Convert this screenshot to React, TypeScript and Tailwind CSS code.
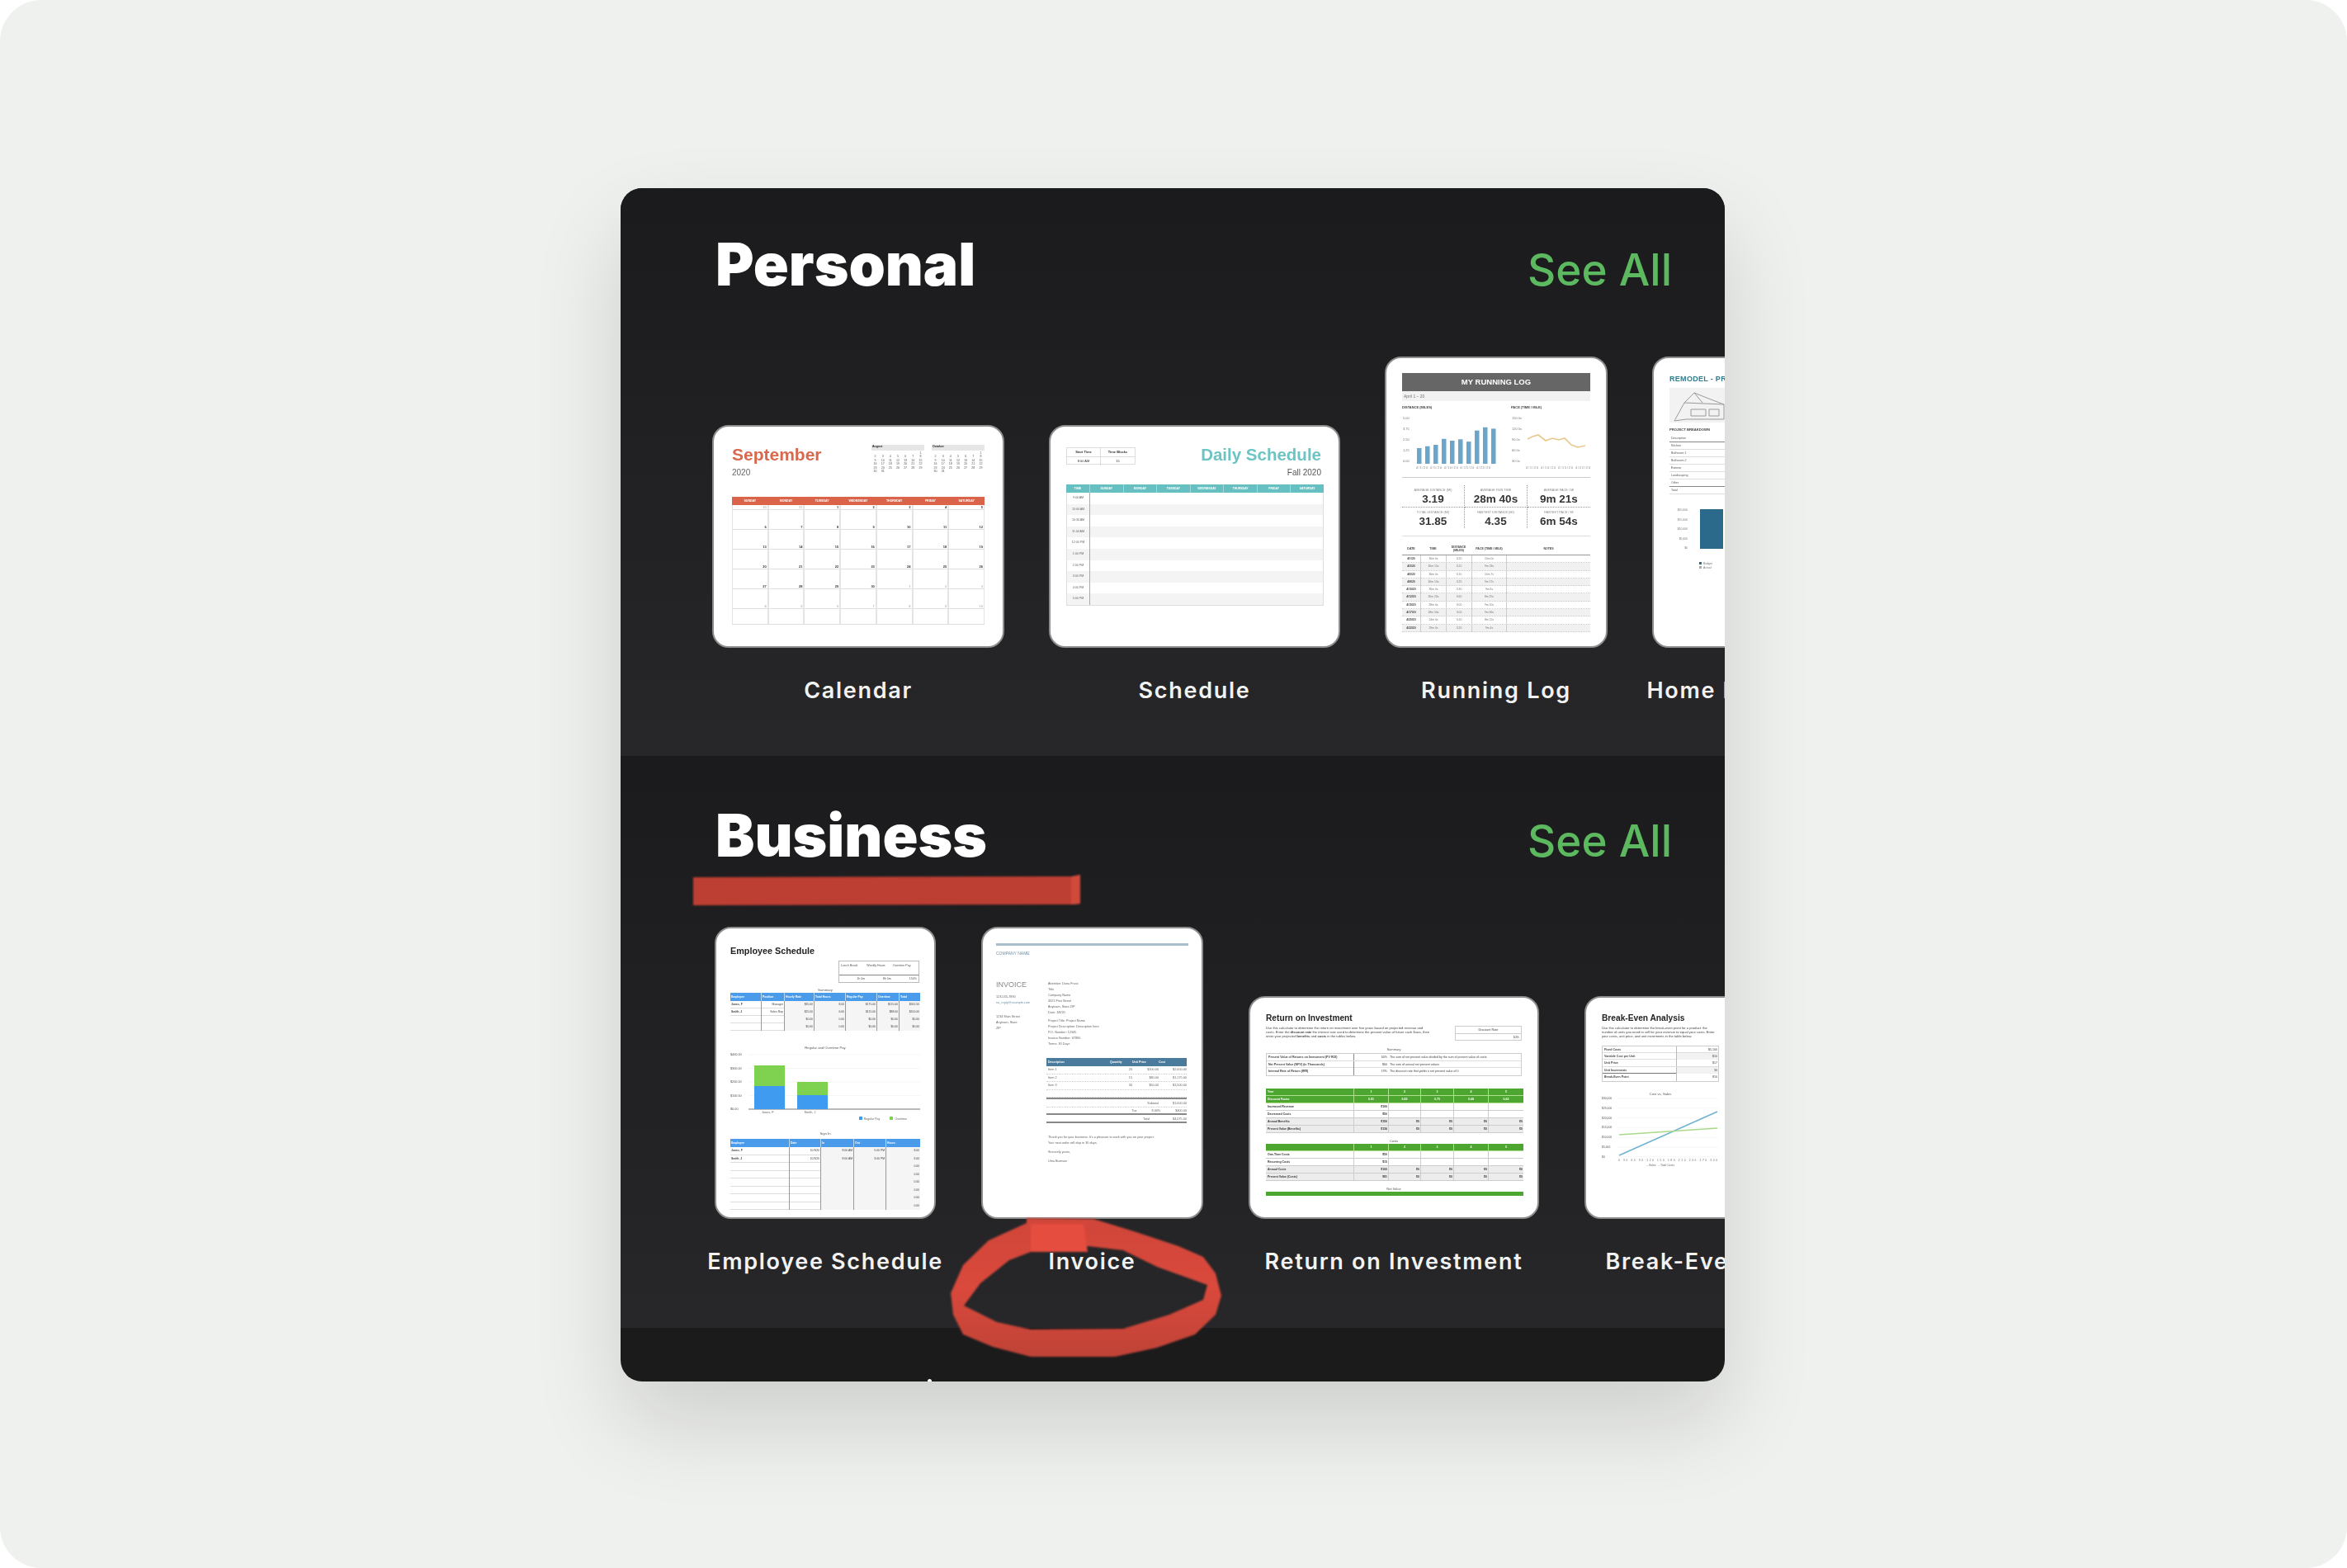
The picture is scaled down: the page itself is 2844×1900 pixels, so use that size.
import type { ReactNode } from 'react'

const weekdays = ['SUNDAY', 'MONDAY', 'TUESDAY', 'WEDNESDAY', 'THURSDAY', 'FRIDAY', 'SATURDAY']
const calendarDays = [
  ['30', '31', '1', '2', '3', '4', '5'],
  ['6', '7', '8', '9', '10', '11', '12'],
  ['13', '14', '15', '16', '17', '18', '19'],
  ['20', '21', '22', '23', '24', '25', '26'],
  ['27', '28', '29', '30', '1', '2', '3'],
  ['4', '5', '6', '7', '8', '9', '10'],
]
const scheduleTimes = ['9:00 AM', '10:00 AM', '10:30 AM', '11:00 AM', '12:00 PM', '1:00 PM', '2:00 PM', '3:00 PM', '4:00 PM', '5:00 PM']
const runRows = [
  ['4/1/20', '30m 0s', '3.20', '10m 0s'],
  ['4/3/20', '30m 15s', '3.25', '9m 18s'],
  ['4/5/20', '30m 0s', '3.15', '10m 7s'],
  ['4/8/20', '30m 10s', '3.25', '9m 17s'],
  ['4/10/20', '30m 0s', '3.30', '9m 6s'],
  ['4/12/20', '30m 20s', '3.60', '8m 25s'],
  ['4/15/20', '28m 0s', '3.00', '9m 20s'],
  ['4/17/20', '28m 50s', '3.00', '9m 36s'],
  ['4/20/20', '24m 0s', '3.20', '8m 12s'],
  ['4/22/20', '29m 0s', '3.20', '9m 4s'],
]
const invoiceLines = ['Attention: Dana Fruss', 'Title', 'Company Name', '4321 First Street', 'Anytown, State ZIP', 'Date: 1/8/20']
const projectLines = ['Project Title: Project Name', 'Project Description: Description here', 'P.O. Number: 12345', 'Invoice Number: 67890', 'Terms: 30 Days']

function Card({ className, children }: { className: string; children: ReactNode }) {
  return (
    <div className={`shrink-0 overflow-hidden rounded-[20px] border-[2px] border-[#8e8e8e] bg-white font-['Liberation_Sans',sans-serif] text-[#333] ${className}`}>
      <div className="h-full blur-[0.7px]">{children}</div>
    </div>
  )
}

function Tile({ className, label, card, children }: { className: string; label: string; card: string; children: ReactNode }) {
  return (
    <div className={`flex shrink-0 flex-col items-center ${className}`}>
      <Card className={card}>{children}</Card>
      <p className="mt-[32px] w-max text-[27px] leading-[40px] font-semibold tracking-[1.7px] whitespace-nowrap text-[#f2f2f2]">
        {label}
      </p>
    </div>
  )
}

function SectionHeader({ title }: { title: string }) {
  return (
    <div className="flex h-[80px] items-center justify-between pr-[64px] pl-[115px]">
      <h2 className="text-[71px] leading-[80px] font-black text-white">{title}</h2>
      <span className="pt-[14px] text-[53px] leading-[80px] font-medium text-[#5cb95f]">See All</span>
    </div>
  )
}

function MiniMonth({ name }: { name: string }) {
  return (
    <div className="w-[64px] text-[3.6px] leading-[4.4px] text-[#555]">
      <div className="h-[7px] bg-[#e6e6e6] px-[1px] font-bold text-[#222]">{name}</div>
      <div className="mt-[1px] grid grid-cols-7 text-center">
        {Array.from({ length: 31 }, (_, i) => (
          <span key={i} className={i === 0 ? 'col-start-7' : ''}>
            {i + 1}
          </span>
        ))}
      </div>
    </div>
  )
}

function CalendarThumb() {
  return (
    <div className="px-[22px] pt-[22px]">
      <div className="flex h-[63px] justify-between">
        <div>
          <p className="text-[21px] leading-[24px] font-bold text-[#d8684e]">September</p>
          <p className="mt-[4px] text-[10px] leading-[12px] text-[#666]">2020</p>
        </div>
        <div className="flex gap-[9px]">
          <MiniMonth name="August" />
          <MiniMonth name="October" />
        </div>
      </div>
      <div className="grid h-[10px] grid-cols-7 bg-[#d9644a] text-center text-[3.6px] leading-[10px] font-bold text-white">
        {weekdays.map((d) => (
          <span key={d}>{d}</span>
        ))}
      </div>
      <div className="border-b border-[#ddd]">
        {calendarDays.map((row, r) => (
          <div key={r} className="grid h-[24px] grid-cols-7">
            {row.map((d, c) => (
              <div key={c} className="border-r border-l border-[#e4e4e4] text-right">
                <div className={`h-[6px] border-b border-[#ddd] pr-[1px] text-[4px] leading-[6px] font-bold ${(r === 0 && c < 2) || (r === 4 && c > 3) || r > 4 ? 'text-[#bbb]' : 'text-[#333]'}`}>
                  {d}
                </div>
              </div>
            ))}
          </div>
        ))}
      </div>
    </div>
  )
}

function ScheduleThumb() {
  return (
    <div className="px-[19px] pt-[25px]">
      <div className="flex h-[45px] justify-between">
        <div className="grid h-[21px] w-[84px] grid-cols-2 border border-[#ddd] text-center text-[4px] leading-[10px] text-[#333]">
          <span className="border-r border-b border-[#ddd] font-bold">Start Time</span>
          <span className="border-b border-[#ddd] font-bold">Time Blocks</span>
          <span className="border-r border-[#ddd]">8:00 AM</span>
          <span>15</span>
        </div>
        <div className="pr-[2px] text-right">
          <p className="text-[20.5px] leading-[18px] font-bold text-[#6dc4c4]">Daily Schedule</p>
          <p className="mt-[7px] text-[10px] leading-[12px] text-[#555]">Fall 2020</p>
        </div>
      </div>
      <div className="grid h-[10px] w-[312px] grid-cols-[28px_repeat(7,1fr)] bg-[#66c0c2] text-center text-[3.5px] leading-[10px] font-bold text-white">
        <span>TIME</span>
        {weekdays.map((d) => (
          <span key={d} className="border-l border-white/40">
            {d}
          </span>
        ))}
      </div>
      <div className="w-[312px] border border-t-0 border-[#ddd]">
        {scheduleTimes.map((t, i) => (
          <div key={t} className={`grid h-[13.6px] grid-cols-[28px_1fr] ${i % 2 ? 'bg-[#f4f4f4]' : 'bg-white'}`}>
            <span className="border-r border-[#aaa] text-center text-[3.6px] leading-[13px] text-[#666]">{t}</span>
            <span />
          </div>
        ))}
      </div>
    </div>
  )
}

function RunningLogThumb() {
  const bars = [34, 38, 41, 54, 50, 53, 48, 72, 79, 76]
  return (
    <div className="px-[19px] pt-[18px]">
      <div className="h-[22px] bg-[#666] text-center text-[9.5px] leading-[22px] font-bold text-white">MY RUNNING LOG</div>
      <div className="h-[12px] bg-[#f2f2f2] pl-[2px] text-[5px] leading-[12px] text-[#777]">April 1 – 20</div>
      <div className="mt-[5px] flex justify-between text-[4px] leading-[6px] font-bold text-[#444]">
        <span>DISTANCE (MILES)</span>
        <span className="w-[96px]">PACE (TIME / MILE)</span>
      </div>
      <svg viewBox="0 0 228 70" className="mt-[3px] h-[70px] w-[228px]">
        {['5.00', '3.75', '2.50', '1.25', '0.00'].map((v, i) => (
          <text key={v} x="1" y={8 + i * 13} fontSize="4" fill="#777">
            {v}
          </text>
        ))}
        {bars.map((h, i) => (
          <rect key={i} x={18 + i * 10} y={62 - h * 0.56} width="5.5" height={h * 0.56} fill="#6aa6c9" />
        ))}
        {['150 0s', '120 0s', '90 0s', '60 0s', '30 0s'].map((v, i) => (
          <text key={v} x="133" y={8 + i * 13} fontSize="4" fill="#777">
            {v}
          </text>
        ))}
        <polyline points="152,32 158,29 165,27 174,34 182,31 190,33 197,31 205,39 213,42 222,40" fill="none" stroke="#e8c88c" strokeWidth="1.6" />
        <text x="17" y="68" fontSize="3.6" fill="#777" textLength="90">
          4/1/20 4/5/20 4/10/20 4/15/20 4/22/20
        </text>
        <text x="150" y="68" fontSize="3.6" fill="#777" textLength="78">
          4/1/20 4/10/20 4/15/20 4/22/20
        </text>
      </svg>
      <div className="mt-[8px] h-px bg-[#ccc]" />
      <div className="mt-[9px] grid h-[52px] grid-cols-3 text-center">
        {[
          ['AVERAGE DISTANCE (MI)', '3.19'],
          ['AVERAGE RUN TIME', '28m 40s'],
          ['AVERAGE PACE / MI', '9m 21s'],
          ['TOTAL DISTANCE (MI)', '31.85'],
          ['FASTEST DISTANCE (MI)', '4.35'],
          ['FASTEST PACE / MI', '6m 54s'],
        ].map(([label, value], i) => (
          <div key={label} className={`${i < 3 ? 'border-b' : ''} ${i % 3 < 2 ? 'border-r' : ''} border-dotted border-[#999]`}>
            <p className="pt-[3px] text-[3.8px] leading-[6px] text-[#888]">{label}</p>
            <p className="text-[13.5px] leading-[15px] font-bold text-[#333]">{value}</p>
          </div>
        ))}
      </div>
      <div className="mt-[9px] h-px bg-[#ddd]" />
      <div className="mt-[8px] grid h-[15px] grid-cols-[22px_31px_31px_43px_1fr] items-center border-b border-[#999] text-center text-[3.5px] leading-[4px] font-bold text-[#444]">
        <span>DATE</span>
        <span>TIME</span>
        <span>DISTANCE (MILES)</span>
        <span>PACE (TIME / MILE)</span>
        <span>NOTES</span>
      </div>
      {runRows.map((row, i) => (
        <div key={i} className={`grid h-[9.3px] grid-cols-[22px_31px_31px_43px_1fr] border-b border-dotted border-[#ccc] text-center text-[3.4px] leading-[9px] text-[#777] ${i % 2 ? 'bg-[#f1f1f1]' : ''}`}>
          <span className="font-bold text-[#444]">{row[0]}</span>
          <span className="border-l border-[#ccc]">{row[1]}</span>
          <span className="border-l border-[#ccc]">{row[2]}</span>
          <span className="border-x border-[#ccc]">{row[3]}</span>
          <span />
        </div>
      ))}
    </div>
  )
}

function HomeThumb() {
  const rows = ['Description', 'Kitchen', 'Bathroom 1', 'Bathroom 2', 'Exterior', 'Landscaping', 'Other', 'Total']
  return (
    <div className="w-[268px] px-[19px] pt-[18px]">
      <p className="text-[9px] leading-[14px] font-bold tracking-[0.3px] text-[#2f7c8c]">REMODEL - PROJECT BUDGET</p>
      <svg viewBox="0 0 228 42" className="mt-[4px] h-[42px] w-[228px] bg-[#f2f2f2]">
        <path d="M6 40 L18 18 L30 6 L50 14 L66 20 L66 38 L20 38 Z M18 18 L66 20 M30 6 L40 18 M26 26 H44 V34 H26 Z M48 26 H60 V34 H48 Z" fill="none" stroke="#9a9a9a" strokeWidth="1" />
      </svg>
      <p className="mt-[6px] text-[4.2px] leading-[6px] font-bold text-[#444]">PROJECT BREAKDOWN</p>
      <div className="mt-[3px] text-[3.6px] leading-[8.8px] text-[#555]">
        {rows.map((r, i) => (
          <div key={r} className={`h-[9px] border-b pl-[2px] ${i === 0 || i === 6 ? 'border-[#888]' : 'border-[#ddd]'}`}>
            {r}
          </div>
        ))}
      </div>
      <p className="mt-[6px] w-[90px] text-right text-[3.6px] leading-[6px] text-[#555]">SUMMARY</p>
      <div className="mt-[4px] flex h-[52px] items-stretch gap-[15px]">
        <div className="flex w-[22px] flex-col justify-between text-right text-[3.4px] leading-[6px] text-[#777]">
          <span>$20,000</span>
          <span>$15,000</span>
          <span>$10,000</span>
          <span>$5,000</span>
          <span>$0</span>
        </div>
        <div className="mt-[2px] mb-[2px] w-[28px] bg-[#2b6a8a]" />
      </div>
      <div className="mt-[14px] ml-[36px] text-[3.4px] leading-[5px] text-[#777]">
        <p><span className="mr-[2px] inline-block size-[3px] bg-[#2b6a8a]" />Budget</p>
        <p><span className="mr-[2px] inline-block size-[3px] bg-[#aaa]" />Actual</p>
      </div>
    </div>
  )
}

function BlueTable({ headers, cols, rows, height }: { headers: string[]; cols: string; rows: string[][]; height: string }) {
  return (
    <div className="text-[3.4px] text-[#444]">
      <div className={`grid h-[10px] bg-[#4a9cea] leading-[10px] font-bold text-white ${cols}`}>
        {headers.map((h) => (
          <span key={h} className="border-r border-white/60 pl-[1px] last:border-r-0">
            {h}
          </span>
        ))}
      </div>
      {rows.map((row, r) => (
        <div key={r} className={`grid border-b border-[#ddd] ${height} ${cols}`}>
          {row.map((c, i) => (
            <span key={i} className={`border-r border-[#999] pr-[1px] last:border-r-0 ${i < 1 ? 'pl-[1px] text-left font-bold' : 'text-right'} ${i > 1 ? 'bg-[#f5f5f5]' : ''}`}>
              {c}
            </span>
          ))}
        </div>
      ))}
    </div>
  )
}

function EmployeeThumb() {
  return (
    <div className="px-[17px] pt-[20px]">
      <p className="text-[10.8px] leading-[14px] font-bold text-[#222]">Employee Schedule</p>
      <div className="mt-[5px] ml-[131px] h-[27px] w-[98px] border border-[#bbb] text-[3.6px] text-[#555]">
        <div className="grid h-[17px] grid-cols-3 border-b border-[#888] pt-[3px] pl-[2px] leading-[5px]">
          <span>Lunch Break</span>
          <span>Weekly Hours</span>
          <span>Overtime Pay</span>
        </div>
        <div className="grid grid-cols-3 pr-[2px] text-right leading-[8px]">
          <span>1h 0m</span>
          <span>8h 0m</span>
          <span>150%</span>
        </div>
      </div>
      <p className="mt-[6px] text-center text-[4.2px] leading-[6px] text-[#555]">Summary</p>
      <BlueTable
        cols="grid-cols-[38px_28px_36px_38px_38px_27px_1fr]"
        height="h-[9px] leading-[9px]"
        headers={['Employee', 'Position', 'Hourly Rate', 'Total Hours', 'Regular Pay', 'Overtime', 'Total']}
        rows={[
          ['Jones, F', 'Manager', '$35.00', '8.00', '$175.00', '$115.00', '$262.50'],
          ['Smith, J', 'Sales Rep', '$25.00', '6.00', '$115.00', '$88.00', '$200.00'],
          ['', '', '$0.00', '0.00', '$0.00', '$0.00', '$0.00'],
          ['', '', '$0.00', '0.00', '$0.00', '$0.00', '$0.00'],
        ]}
      />
      <p className="mt-[18px] text-center text-[4.2px] leading-[6px] text-[#555]">Regular and Overtime Pay</p>
      <svg viewBox="0 0 230 72" className="h-[72px] w-[230px]">
        {['$400.00', '$300.00', '$200.00', '$100.00', '$0.00'].map((v, i) => (
          <g key={v}>
            <text x="0" y={6 + i * 16.5} fontSize="3.8" fill="#555">
              {v}
            </text>
            <line x1="22" x2="230" y1={5 + i * 16.5} y2={5 + i * 16.5} stroke={i === 4 ? '#bbb' : '#f0f0f0'} strokeWidth={i === 4 ? 2 : 0.6} />
          </g>
        ))}
        <rect x="29" y="18" width="37" height="25" fill="#7fd24f" />
        <rect x="29" y="43" width="37" height="28" fill="#3f9bf0" />
        <rect x="81" y="38" width="37" height="16" fill="#7fd24f" />
        <rect x="81" y="54" width="37" height="17" fill="#3f9bf0" />
      </svg>
      <div className="flex text-[3.8px] leading-[6px] text-[#666]">
        <span className="ml-[38px]">Jones, F</span>
        <span className="ml-[37px]">Smith, J</span>
      </div>
      <div className="mt-[2px] flex justify-end gap-[12px] pr-[16px] text-[3.6px] leading-[6px] text-[#666]">
        <span><span className="mr-[2px] inline-block size-[4px] bg-[#3f9bf0]" />Regular Pay</span>
        <span><span className="mr-[2px] inline-block size-[4px] bg-[#7fd24f]" />Overtime</span>
      </div>
      <p className="mt-[12px] text-center text-[4.2px] leading-[6px] text-[#555]">Sign In</p>
      <div className="mt-[3px]">
        <BlueTable
          cols="grid-cols-[72px_38px_40px_39px_1fr]"
          height="h-[9.5px] leading-[9.5px]"
          headers={['Employee', 'Date', 'In', 'Out', 'Hours']}
          rows={[
            ['Jones, F', '10/3/20', '8:00 AM', '5:00 PM', '8.00'],
            ['Smith, J', '10/3/20', '8:00 AM', '3:00 PM', '6.00'],
            ['', '', '', '', '0.00'],
            ['', '', '', '', '0.00'],
            ['', '', '', '', '0.00'],
            ['', '', '', '', '0.00'],
            ['', '', '', '', '0.00'],
            ['', '', '', '', '0.00'],
          ]}
        />
      </div>
    </div>
  )
}

function InvoiceThumb() {
  const items = [
    ['Item 1', '20', '$100.00', '$2,000.00'],
    ['Item 2', '15', '$80.00', '$1,175.00'],
    ['Item 3', '30', '$50.00', '$1,500.00'],
    ['', '', '', ''],
  ]
  return (
    <div className="px-[16px] pt-[18px] text-[3.8px] leading-[7px] text-[#666]">
      <div className="h-[3px] bg-[#a9bfcc]" />
      <p className="mt-[5px] text-[5px] leading-[8px] text-[#6e93aa]">COMPANY NAME</p>
      <div className="mt-[30px] flex">
        <div className="w-[63px]">
          <p className="text-[9px] leading-[8px] text-[#888]">INVOICE</p>
          <p className="mt-[8px]">123-555-7890</p>
          <p className="text-[#6e93aa]">no_reply@example.com</p>
          <p className="mt-[10px]">1234 Main Street</p>
          <p>Anytown, State</p>
          <p>ZIP</p>
        </div>
        <div>
          {invoiceLines.map((l) => (
            <p key={l}>{l}</p>
          ))}
          <div className="mt-[3px]">
            {projectLines.map((l) => (
              <p key={l}>{l}</p>
            ))}
          </div>
        </div>
      </div>
      <div className="mt-[13px] ml-[61px] w-[170px]">
        <div className="grid h-[10px] grid-cols-[75px_27px_32px_1fr] bg-[#4a7a9c] pl-[2px] text-[3.6px] leading-[10px] font-bold text-white">
          <span>Description</span>
          <span>Quantity</span>
          <span>Unit Price</span>
          <span>Cost</span>
        </div>
        {items.map((row, i) => (
          <div key={i} className="grid h-[9.5px] grid-cols-[75px_27px_32px_1fr] border-b border-dotted border-[#ccc] pl-[2px] leading-[9px]">
            <span>{row[0]}</span>
            <span className="text-right">{row[1]}</span>
            <span className="text-right">{row[2]}</span>
            <span className="text-right">{row[3]}</span>
          </div>
        ))}
        <div className="border-t-2 border-[#888]">
          <div className="flex h-[10px] justify-end gap-[17px] border-b border-dotted border-[#ccc] leading-[10px]">
            <span>Subtotal</span>
            <span>$1,000.00</span>
          </div>
          <div className="flex h-[9px] justify-end gap-[18px] border-b-2 border-[#888] leading-[9px]">
            <span>Tax</span>
            <span>8.00%</span>
            <span>$400.00</span>
          </div>
          <div className="flex h-[10px] justify-end gap-[28px] border-b-2 border-[#888] leading-[10px]">
            <span>Total</span>
            <span>$4,075.00</span>
          </div>
        </div>
      </div>
      <div className="mt-[14px] ml-[63px]">
        <p>Thank you for your business. It’s a pleasure to work with you on your project.</p>
        <p>Your next order will ship in 30 days.</p>
        <p className="mt-[4px]">Sincerely yours,</p>
        <p className="mt-[4px]">Uma Bamsan</p>
      </div>
    </div>
  )
}

function GreenRows({ head, rows }: { head: string[][]; rows: string[][] }) {
  const cols = 'grid-cols-[107px_42px_39px_40px_42px_1fr]'
  return (
    <div className="w-[312px] text-[3.5px] text-[#333]">
      {head.map((row, r) => (
        <div key={r} className={`grid h-[9px] border-b border-[#aee08f] bg-[#4ca62f] text-center leading-[9px] font-bold text-white ${cols}`}>
          {row.map((c, i) => (
            <span key={i} className={`border-r border-[#aee08f] last:border-r-0 ${i === 0 ? 'pl-[2px] text-left' : ''}`}>
              {c}
            </span>
          ))}
        </div>
      ))}
      {rows.map((row, r) => (
        <div key={r} className={`grid h-[9px] border-b border-[#ccc] text-right leading-[9px] font-bold ${r > 1 ? 'bg-[#ececec]' : ''} ${cols}`}>
          {row.map((c, i) => (
            <span key={i} className={`border-r border-[#ccc] pr-[1px] last:border-r-0 ${i === 0 ? 'pl-[2px] text-left' : ''}`}>
              {c}
            </span>
          ))}
        </div>
      ))}
    </div>
  )
}

function RoiThumb() {
  return (
    <div className="px-[19px] pt-[19px]">
      <p className="text-[10.2px] leading-[12px] font-bold text-[#222]">Return on Investment</p>
      <div className="mt-[3px] flex justify-between">
        <p className="w-[198px] text-[4.1px] leading-[5.2px] text-[#444]">
          Use this calculator to determine the return on investment over five years based on projected revenue and costs. Enter the <b>discount rate</b> the interest rate used to determine the present value of future cash flows, then enter your projected <b>benefits</b> and <b>costs</b> in the tables below.
        </p>
        <div className="h-[18px] w-[81px] border border-[#ccc] text-center text-[3.8px] leading-[8px] text-[#444]">
          <p className="border-b border-[#ccc]">Discount Rate</p>
          <p className="pr-[2px] text-right">10%</p>
        </div>
      </div>
      <p className="mt-[8px] text-center text-[4px] leading-[6px] text-[#555]">Summary</p>
      <div className="mt-[1px] border border-[#ccc] text-[3.6px] text-[#444]">
        {[
          ['Present Value of Returns on Investment (PV ROI)', '60%', 'The sum of net present value divided by the sum of present value of costs'],
          ['Net Present Value (NPV) (in Thousands)', '$60', 'The sum of annual net present values'],
          ['Internal Rate of Return (IRR)', '19%', 'The discount rate that yields a net present value of 0'],
        ].map((r) => (
          <div key={r[0]} className="grid h-[8.5px] grid-cols-[106px_41px_1fr] border-b border-[#ddd] leading-[8px] last:border-b-0">
            <span className="border-r border-[#888] pl-[2px] font-bold">{r[0]}</span>
            <span className="pr-[1px] text-right">{r[1]}</span>
            <span className="pl-[2px]">{r[2]}</span>
          </div>
        ))}
      </div>
      <div className="mt-[15px]">
        <GreenRows
          head={[
            ['Year', '1', '2', '3', '4', '5'],
            ['Discount Factor', '0.91', '0.83', '0.75', '0.68', '0.62'],
          ]}
          rows={[
            ['Increased Revenue', '$100', '', '', '', ''],
            ['Decreased Costs', '$50', '', '', '', ''],
            ['Annual Benefits', '$150', '$0', '$0', '$0', '$0'],
            ['Present Value (Benefits)', '$136', '$0', '$0', '$0', '$0'],
          ]}
        />
      </div>
      <p className="mt-[7px] text-center text-[4px] leading-[6px] text-[#555]">Costs</p>
      <GreenRows
        head={[['', '1', '2', '3', '4', '5']]}
        rows={[
          ['One-Time Costs', '$50', '', '', '', ''],
          ['Recurring Costs', '$15', '', '', '', ''],
          ['Annual Costs', '$100', '$0', '$0', '$0', '$0'],
          ['Present Value (Costs)', '$91', '$0', '$0', '$0', '$0'],
        ]}
      />
      <p className="mt-[7px] text-center text-[4px] leading-[6px] text-[#555]">Net Value</p>
      <div className="h-[5px] w-[312px] bg-[#4ca62f]" />
    </div>
  )
}

function BreakEvenThumb() {
  return (
    <div className="w-[348px] px-[19px] pt-[19px]">
      <p className="text-[10.2px] leading-[12px] font-bold text-[#222]">Break-Even Analysis</p>
      <p className="mt-[3px] w-[142px] text-[4.1px] leading-[5.2px] text-[#444]">
        Use this calculator to determine the break-even point for a product: the number of units you need to sell for your revenue to equal your costs. Enter your costs, unit price, and unit increments in the table below.
      </p>
      <div className="mt-[8px] w-[142px] border border-[#ccc] text-[3.6px] text-[#444]">
        {[
          ['Fixed Costs', '$5,100'],
          ['Variable Cost per Unit', '$10'],
          ['Unit Price', '$17'],
          ['Unit Increments', '30'],
          ['Break-Even Point', '810'],
        ].map(([a, b], i) => (
          <div key={a} className={`grid h-[8.4px] grid-cols-[90px_1fr] border-b leading-[8px] last:border-b-0 ${i === 3 ? 'border-[#777]' : 'border-[#ddd]'}`}>
            <span className="border-r border-[#bbb] pl-[2px] font-bold">{a}</span>
            <span className={`pr-[1px] text-right ${i % 2 ? 'bg-[#f2f2f2]' : ''}`}>{b}</span>
          </div>
        ))}
      </div>
      <p className="mt-[12px] w-[142px] text-center text-[4.2px] leading-[6px] text-[#555]">Cost vs. Sales</p>
      <svg viewBox="0 0 142 80" className="h-[80px] w-[142px]">
        {['$30,000', '$25,000', '$20,000', '$15,000', '$10,000', '$5,000', '$0'].map((v, i) => (
          <g key={v}>
            <text x="0" y={3 + i * 11.8} fontSize="3.4" fill="#555">
              {v}
            </text>
            <line x1="19" x2="141" y1={2 + i * 11.8} y2={2 + i * 11.8} stroke="#eee" strokeWidth="0.6" />
          </g>
        ))}
        <line x1="21" y1="71" x2="140" y2="18" stroke="#6fb3d2" strokeWidth="1.6" />
        <line x1="21" y1="46" x2="140" y2="38" stroke="#a9d98a" strokeWidth="1.6" />
        <text x="20" y="78" fontSize="3.2" fill="#666" textLength="120">0 30 60 90 120 150 180 210 240 270 300</text>
      </svg>
      <p className="mt-[1px] w-[142px] text-center text-[3.4px] leading-[5px] text-[#666]">– Sales &nbsp; – Total Costs</p>
    </div>
  )
}

export default function App() {
  return (
    <div className="h-[1900px] w-[2844px] bg-white font-['Inter',sans-serif]">
      <div className="relative h-full overflow-hidden rounded-[50px] bg-[#eff1ee] pt-[228px] pl-[752px]">
        <div className="relative h-[1446px] w-[1338px] overflow-hidden rounded-[26px] bg-[#1b1b1c] shadow-[0_50px_110px_0_rgba(0,0,0,0.14)]">
          <section className="h-[688px] bg-gradient-to-b from-[#1b1b1d] to-[#272729] pt-[52px]">
            <SectionHeader title="Personal" />
            <div className="mt-[72px] flex items-end gap-[54px] pl-[111px]">
              <Tile className="w-[354px]" label="Calendar" card="h-[270px] w-[354px]">
                <CalendarThumb />
              </Tile>
              <Tile className="w-[353px]" label="Schedule" card="h-[270px] w-[353px]">
                <ScheduleThumb />
              </Tile>
              <Tile className="w-[270px]" label="Running Log" card="h-[353px] w-[270px]">
                <RunningLogThumb />
              </Tile>
              <Tile className="w-[270px]" label="Home Improvement" card="h-[353px] w-[270px]">
                <HomeThumb />
              </Tile>
            </div>
          </section>
          <section className="h-[693px] bg-gradient-to-b from-[#1b1b1d] to-[#272729] pt-[56px]">
            <SectionHeader title="Business" />
            <div className="mt-[71px] flex items-end gap-[55px] pl-[114px]">
              <Tile className="w-[268px]" label="Employee Schedule" card="h-[354px] w-[268px]">
                <EmployeeThumb />
              </Tile>
              <Tile className="w-[269px]" label="Invoice" card="h-[354px] w-[269px]">
                <InvoiceThumb />
              </Tile>
              <Tile className="w-[352px]" label="Return on Investment" card="h-[270px] w-[352px]">
                <RoiThumb />
              </Tile>
              <Tile className="w-[352px]" label="Break-Even Analysis" card="h-[270px] w-[352px]">
                <BreakEvenThumb />
              </Tile>
            </div>
          </section>
          <div className="absolute bottom-0 left-[372px] h-[3px] w-[5px] rounded-t-full bg-white" />
        </div>

        {/* red marker scribbles */}
        <svg viewBox="830 1050 490 60" className="absolute top-[1050px] left-[830px] h-[60px] w-[490px] blur-[0.8px]">
          <polygon points="840,1063 1300,1062 1309,1060 1309,1095 1300,1096 840,1097" fill="#bd3e33" />
          <polygon points="1298,1062 1309,1060 1309,1095 1298,1096" fill="#d04a3c" />
        </svg>
        <svg viewBox="1140 1470 350 185" className="absolute top-[1470px] left-[1140px] h-[185px] w-[350px] blur-[1px]">
          <defs>
            <linearGradient id="ring" x1="0" y1="0" x2="0" y2="1">
              <stop offset="0" stopColor="#d0463a" />
              <stop offset="0.5" stopColor="#da493c" />
              <stop offset="1" stopColor="#bf4337" />
            </linearGradient>
          </defs>
          <path
            fillRule="evenodd"
            fill="url(#ring)"
            d="M1244 1476 L1325 1477 L1377 1493 L1428 1510 L1458 1523 L1473 1543 L1480 1570 L1473 1593 L1448 1617 L1402 1633 L1351 1644 L1249 1644 L1203 1632 L1167 1617 L1155 1593 L1152 1567 L1167 1533 L1198 1503 L1244 1482 Z M1168 1582 L1188 1555 L1223 1527 L1249 1517 L1318 1510 L1361 1515 L1402 1535 L1463 1557 L1458 1575 L1417 1593 L1361 1610 L1249 1611 L1208 1602 Z"
          />
          <polygon points="1249,1483 1313,1483 1318,1517 1249,1517" fill="#e54d3e" />
        </svg>
      </div>
    </div>
  )
}
